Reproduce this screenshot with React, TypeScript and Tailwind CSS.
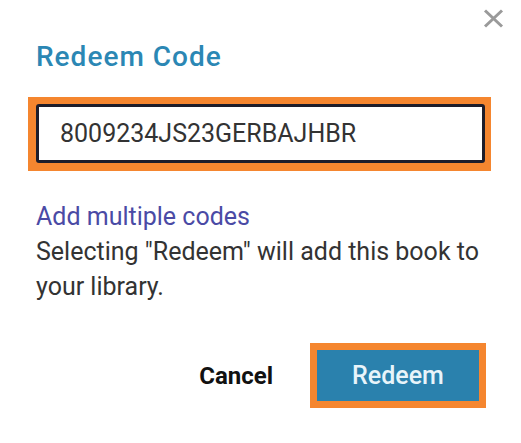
import React from "react";

export default function App() {
  const [code, setCode] = React.useState("8009234JS23GERBAJHBR");

  return (
    <div className="relative w-[521px] h-[443px] bg-white font-['Roboto','Liberation_Sans',sans-serif]">
      <button className="absolute right-[17px] top-[9px] p-0" aria-label="Close">
        <svg width="21" height="19" viewBox="0 0 21 19">
          <path
            d="M2 1.5 L19 17.5 M19 1.5 L2 17.5"
            stroke="#9a9a9a"
            strokeWidth="3"
            fill="none"
          />
        </svg>
      </button>

      <div className="pl-9 pr-[38px] pt-[41px]">
        <h2 className="text-[28px] leading-[32px] font-medium tracking-[1px] text-[#2b87b4]">
          Redeem Code
        </h2>

        {/* focus ring is square, the field itself has a tiny radius */}
        <div className="mt-[24px] -mx-[8px] -mb-[8px] bg-[#f5862f] pt-[7px] pb-[8px] pl-[8px] pr-[6px]">
          <input
            value={code}
            onChange={(e) => setCode(e.target.value)}
            className="block w-full h-[59px] bg-white border-[3px] border-[#1d1d2b] rounded-[3px] pl-[21px] text-[25px] text-[#333] outline-none"
          />
        </div>

        <div className="mt-[36px] -mr-[10px] text-[25px] leading-[35px]">
          <a href="#" className="block text-[#4a4aa5]">
            Add multiple codes
          </a>
          <p className="text-[#333]">
            Selecting "Redeem" will add this book to your library.
          </p>
        </div>

        <div className="mt-[46px] mr-[4px] flex items-center justify-end gap-[44px]">
          <button className="text-[24px] font-bold text-[#111]">Cancel</button>
          <button className="w-[162px] h-[51px] bg-[#2a81ad] text-[25px] font-medium text-[#e8f4fa] outline-[7px] outline-solid outline-[#f5862f]">
            Redeem
          </button>
        </div>
      </div>
    </div>
  );
}
